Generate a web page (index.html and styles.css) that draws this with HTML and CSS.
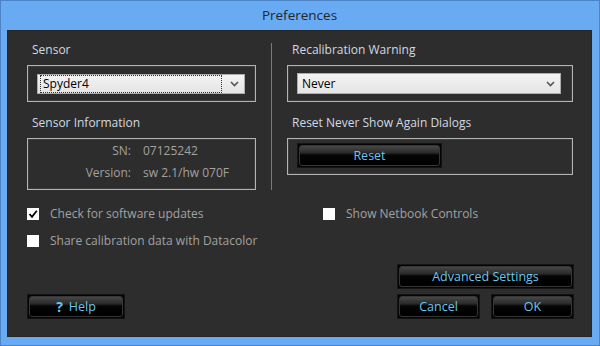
FILE: index.html
```html
<!DOCTYPE html>
<html lang="en">
<head>
    <meta charset="UTF-8">
    <title>Preferences</title>
    <link rel="stylesheet" href="styles.css">
</head>
<body>
    <div class="window">
        <div class="titlebar">Preferences</div>

        <div class="content">
            <div class="top-grid">
                <div class="column">
                    <div class="group-label">Sensor</div>
                    <div class="group-box">
                        <div class="select select-left">
                            <span class="select-value focused">Spyder4</span>
                            <svg class="chevron" width="9" height="6" viewBox="0 0 9 6">
                                <path d="M1 1 L4.5 4.5 L8 1" fill="none" stroke="#555" stroke-width="1.6"/>
                            </svg>
                        </div>
                    </div>

                    <div class="group-label">Sensor Information</div>
                    <div class="group-box info-box">
                        <div class="info-grid">
                            <span class="info-key">SN:</span>
                            <span class="info-val">07125242</span>
                            <span class="info-key">Version:</span>
                            <span class="info-val">sw 2.1/hw 070F</span>
                        </div>
                    </div>
                </div>

                <div class="divider"></div>

                <div class="column">
                    <div class="group-label">Recalibration Warning</div>
                    <div class="group-box">
                        <div class="select select-right">
                            <span class="select-value">Never</span>
                            <svg class="chevron" width="9" height="6" viewBox="0 0 9 6">
                                <path d="M1 1 L4.5 4.5 L8 1" fill="none" stroke="#555" stroke-width="1.6"/>
                            </svg>
                        </div>
                    </div>

                    <div class="group-label">Reset Never Show Again Dialogs</div>
                    <div class="group-box reset-box">
                        <button class="btn btn-reset"><span class="btn-face">Reset</span></button>
                    </div>
                </div>
            </div>

            <div class="options">
                <label class="check-row">
                    <span class="checkbox">
                        <svg width="10" height="10" viewBox="0 0 10 10">
                            <path d="M1.5 5 L4 7.8 L8.8 1.8" fill="none" stroke="#000" stroke-width="1.8"/>
                        </svg>
                    </span>
                    Check for software updates
                </label>
                <label class="check-row">
                    <span class="checkbox"></span>
                    Show Netbook Controls
                </label>
                <label class="check-row">
                    <span class="checkbox"></span>
                    Share calibration data with Datacolor
                </label>
            </div>

            <div class="footer">
                <button class="btn btn-help">
                    <span class="btn-face"><span class="help-mark">?</span> Help</span>
                </button>
                <div class="footer-right">
                    <button class="btn btn-wide"><span class="btn-face">Advanced Settings</span></button>
                    <div class="btn-row">
                        <button class="btn btn-small"><span class="btn-face">Cancel</span></button>
                        <button class="btn btn-small"><span class="btn-face">OK</span></button>
                    </div>
                </div>
            </div>
        </div>
    </div>
</body>
</html>
```

FILE: styles.css
```css
:root {
    --title-blue: #69abf3;
    --frame-blue: #4c82c6;
    --panel: #2d2d2d;
    --label: #d2d9e3;
    --muted: #a2a2a2;
    --box-line: #b4b4b4;
    --btn-text: #68c6ef;
}

* {
    margin: 0;
    padding: 0;
    box-sizing: border-box;
    font-family: 'Open Sans', 'Liberation Sans', sans-serif;
}

body {
    background-color: var(--title-blue);
    width: 600px;
    height: 346px;
    overflow: hidden;
}

.window {
    width: 600px;
    height: 346px;
    background-color: var(--title-blue);
    border: 1px solid var(--frame-blue);
    padding: 0 7px 8px 6px;
    display: flex;
    flex-direction: column;
}

.titlebar {
    height: 29px;
    line-height: 28px;
    text-align: center;
    font-size: 13.5px;
    color: #22262c;
}

.content {
    flex: 1;
    background-color: var(--panel);
    border: 1px solid #262626;
    padding: 11px 17px 17px 19px;
    display: flex;
    flex-direction: column;
}

/* upper part: two group columns */
.top-grid {
    display: grid;
    grid-template-columns: 229px 1px 286px;
    column-gap: 15px;
}

.group-label {
    font-size: 12px;
    line-height: 16px;
    color: var(--label);
    padding-left: 5px;
    margin-bottom: 7px;
}

.group-box {
    border: 1px solid var(--box-line);
    box-shadow: inset 0 0 0 1px #3c3c3c;
    height: 37px;
    padding: 8px 10px 0 9px;
    margin-bottom: 13px;
}

.group-box:last-child {
    margin-bottom: 0;
}

.divider {
    background-color: #7a7a7a;
    margin-top: 1px;
}

.select {
    height: 20px;
    background: linear-gradient(to bottom, #f3f3f3, #e4e4e4);
    border: 1px solid #acacac;
    display: flex;
    align-items: center;
    justify-content: space-between;
    padding: 0 5px 0 2px;
}

.select-right {
    margin-top: -1px;
    height: 21px;
    margin-right: 1px;
}

.select-value {
    font-size: 12px;
    color: #000;
    line-height: 16px;
    padding: 0 2px;
}

.focused {
    flex: 1;
    border: 1px dotted #333;
    margin-right: 8px;
}

.chevron {
    display: block;
}

.info-box {
    height: 52px;
    padding: 1px 0 0 0;
}

.info-grid {
    display: grid;
    grid-template-columns: 103px 1fr;
    column-gap: 12px;
    font-size: 12px;
    line-height: 22px;
    color: var(--muted);
}

.info-key {
    text-align: right;
}

.reset-box {
    padding-top: 4px;
}

/* checkboxes */
.options {
    margin-top: 16px;
    display: grid;
    grid-template-columns: 296px 1fr;
    row-gap: 11px;
}

.check-row {
    display: flex;
    align-items: center;
    gap: 11px;
    font-size: 12px;
    line-height: 16px;
    color: var(--muted);
}

.checkbox {
    width: 12px;
    height: 12px;
    background-color: #fff;
    display: flex;
    align-items: center;
    justify-content: center;
}

/* bottom buttons */
.footer {
    margin-top: auto;
    display: flex;
    justify-content: space-between;
    align-items: flex-end;
}

.footer-right {
    width: 177px;
    display: flex;
    flex-direction: column;
    gap: 5px;
}

.btn-row {
    display: flex;
    justify-content: space-between;
}

.btn {
    height: 25px;
    background-color: #050505;
    border: 1px solid #141414;
    padding: 1px;
    cursor: pointer;
}

.btn-face {
    display: flex;
    align-items: center;
    justify-content: center;
    height: 100%;
    border: 1px solid #363636;
    border-radius: 3px;
    background: linear-gradient(to bottom, #474747 0%, #2a2a2a 35%, #050505 48%, #000 100%);
    color: var(--btn-text);
    font-size: 12.5px;
}

.btn-reset {
    width: 145px;
}

.btn-help {
    width: 98px;
}

.btn-wide {
    width: 177px;
}

.btn-small {
    width: 83px;
}

.help-mark {
    font-weight: 700;
    font-size: 14px;
    margin-right: 6px;
}
```
